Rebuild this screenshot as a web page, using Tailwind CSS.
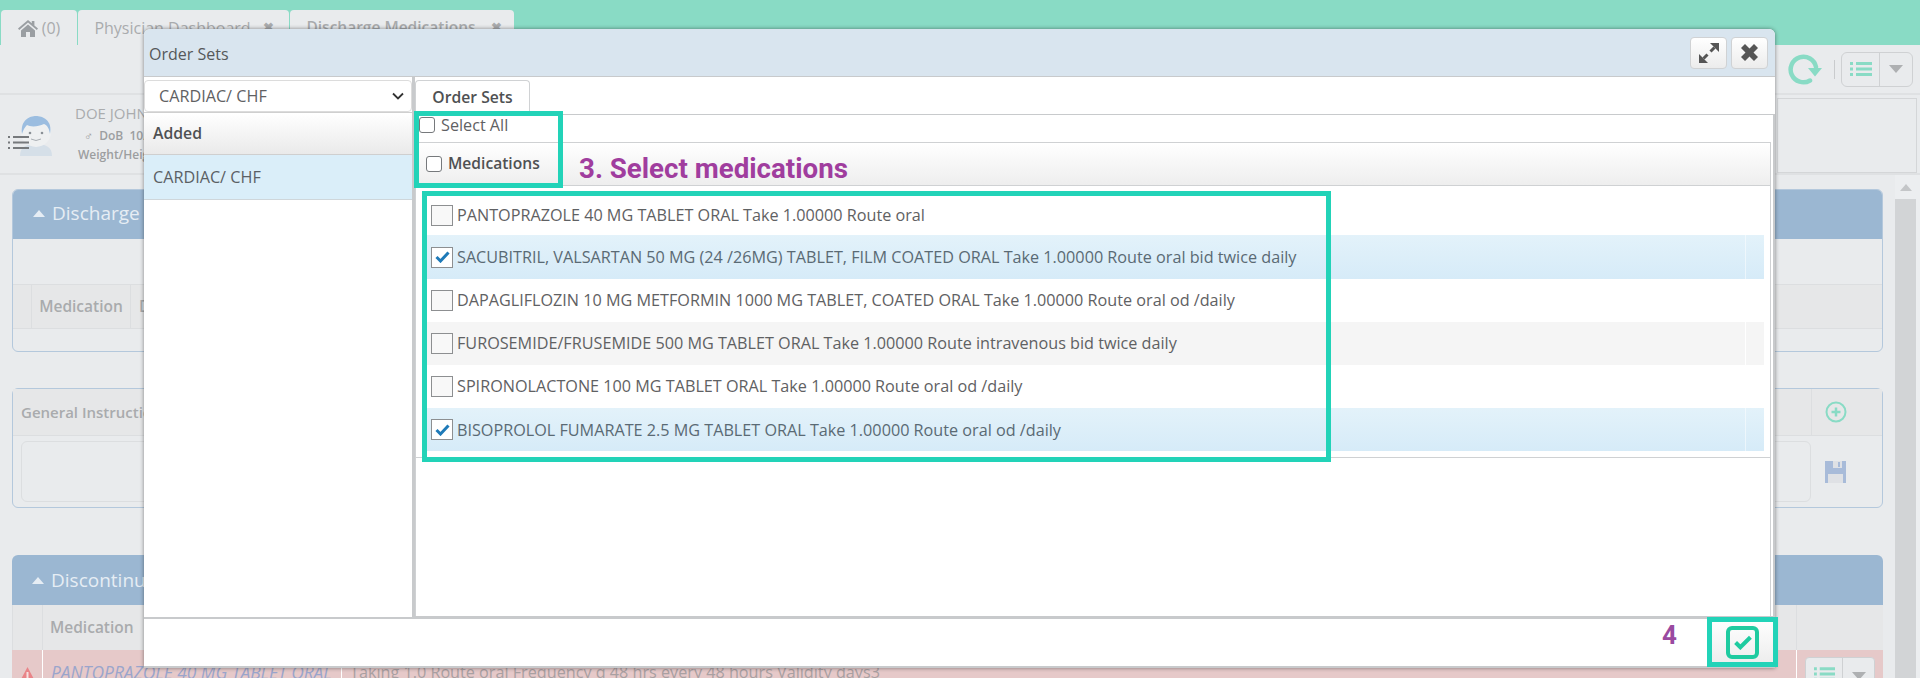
<!DOCTYPE html>
<html lang="en">
<head>
    <meta charset="UTF-8">
    <title>Order Sets</title>
    <script src="https://cdn.jsdelivr.net/npm/@tailwindcss/browser@4"></script>
</head>
<body class="relative h-[678px] w-[1920px] overflow-hidden bg-[#e9ebed] font-['Open_Sans',sans-serif] text-[15px] text-[#a9abad]">

    <!-- Top bar with tabs -->
    <div class="flex h-[45px] items-end gap-px bg-[#89dbc5] pl-px">
        <div class="flex h-[35px] w-[76px] items-center justify-center gap-1 rounded-t bg-[#e9ebed] text-[16px] text-[#a9abad]">
            <svg class="h-[18px] w-[20px]" viewBox="0 0 20 18" fill="#9a9ea2"><path d="M10 1 0 9.600l1.200 1.400L10 3.400l8.800 7.600 1.200-1.400-3.600-3.100V2h-2.600v2.200zM3 11.400V18h5v-5h4v5h5v-6.600L10 5.400z"/></svg>
            <span>(0)</span>
        </div>
        <div class="flex h-[35px] w-[211px] items-center justify-center gap-3 rounded-t bg-[#e9ebed] pl-px text-[16px] text-[#a9abad]"><span>Physician Dashboard</span><span class="text-[13px] font-bold">✖</span></div>
        <div class="flex h-[35px] w-[224px] items-center justify-center gap-[15px] rounded-t bg-[#e9ebed] pl-[4px] text-[15.500px] font-semibold text-[#a9abad]"><span>Discharge Medications</span><span class="text-[13px] font-bold">✖</span></div>
    </div>

    <!-- Toolbar -->
    <div class="flex h-[50px] items-center justify-end border-b-2 border-[#dfe1e3] pr-[7px]">
        <svg class="mr-[12px] h-[32px] w-[34px]" viewBox="0 0 34 32" fill="none"><path d="M22 27.500A12.800 12.800 0 1 1 28 14" stroke="#89dbc5" stroke-width="4.500" stroke-linecap="round"/><path d="M20 15h14l-7 8.500z" fill="#89dbc5"/></svg>
        <div class="mr-[6px] h-[19px] w-px bg-[#c9cbcd]"></div>
        <div class="flex h-[35px] w-[72px] overflow-hidden rounded-md border border-[#cfd1d3]">
            <div class="flex w-[38px] items-center justify-center border-r border-[#cfd1d3]">
                <svg class="h-[16px] w-[22px]" viewBox="0 0 22 16" fill="#89dbc5"><path d="M0 1h3v3H0zM6 1h16v3H6zM0 6.500h3v3H0zM6 6.500h16v3H6zM0 12h3v3H0zM6 12h16v3H6z"/></svg>
            </div>
            <div class="flex flex-1 items-center justify-center"><div class="h-0 w-0 border-x-[7px] border-t-[8px] border-x-transparent border-t-[#aeb0b2]"></div></div>
        </div>
    </div>

    <!-- Patient banner -->
    <div class="flex h-[80px] border-b-2 border-[#dfe1e3]">
        <div class="relative w-[70px] shrink-0">
            <svg class="absolute top-[19px] left-[16px] h-[42px] w-[40px]" viewBox="0 0 40 42"><path d="M4 42c0-9 6-12 16-12s16 3 16 12z" fill="#d5dfe8"/><circle cx="20" cy="18" r="15" fill="#eef0f1"/><path d="M6 20C4 6 14 2 20 2s17 4 14 18c-1-6-3-9-6-10-6 3-14 3-17 1-2 2-4 5-5 9z" fill="#9bbde0"/><circle cx="14" cy="19" r="1.300" fill="#8a9096"/><circle cx="26" cy="19" r="1.300" fill="#8a9096"/><path d="M15 25q5 3 10 0" stroke="#a9aeb3" fill="none"/></svg>
            <svg class="absolute top-[40px] left-[8px] h-[15px] w-[21px]" viewBox="0 0 21 15" fill="#76797c"><path d="M0 1h2v2H0zM5 1h16v2H5zM0 6.500h2v2H0zM5 6.500h16v2H5zM0 12h2v2H0zM5 12h16v2H5z"/></svg>
        </div>
        <div class="flex-1 pt-[6px]">
            <div class="pl-[5px] text-[15px] leading-[24px] text-[#aaacae]">DOE JOHN</div>
            <div class="pl-[14px] text-[12px] leading-[22px] font-semibold text-[#9c9ea0]">♂ &nbsp;DoB &nbsp;10/10/1980</div>
            <div class="pl-[8px] text-[12px] leading-[16px] font-semibold text-[#9c9ea0]">Weight/Height</div>
        </div>
        <div class="mt-[3px] mr-[3px] h-[75px] w-[140px] border border-[#d4d6d8]"></div>
    </div>

    <!-- Scrolling content -->
    <div class="flex h-[503px]">
        <div class="w-[1895px] pt-[14px] pr-[12px] pl-[12px]">
            <div class="h-[163px] overflow-hidden rounded-t-md rounded-b-md border border-[#b4c8dc]">
                <div class="flex h-[49px] items-center gap-[7px] bg-[#9bb7d2] pb-[2px] pl-[20px] text-[19px] text-[#e6edf4]">
                    <div class="h-0 w-0 border-x-[6px] border-b-[7px] border-x-transparent border-b-[#e6edf4]"></div><span>Discharge Medications</span>
                </div>
                <div class="h-[46px] border-b border-[#dcdee0]"></div>
                <div class="flex h-[44px] border-b border-[#dcdee0] bg-[#e6e7e8] text-[15.500px] font-semibold text-[#a9abad]">
                    <div class="w-[19px] border-r border-[#dcdee0]"></div>
                    <div class="flex w-[99px] items-center justify-center border-r border-[#dcdee0]">Medication</div>
                    <div class="flex items-center pl-[8px]">Dose</div>
                </div>
            </div>

            <div class="mt-[36px] h-[120px] rounded-md border border-[#b4c8dc]">
                <div class="flex h-[47px] border-b border-[#dcdee0] bg-[#e6e7e8]">
                    <div class="flex flex-1 items-center pl-[8px] text-[15px] font-semibold">General Instructions</div>
                    <div class="flex w-[71px] items-center justify-center border-l border-[#dcdee0] pr-[22px]">
                        <svg class="h-[22px] w-[22px]" viewBox="0 0 22 22" fill="none" stroke="#89dbc5" stroke-width="2"><circle cx="11" cy="11" r="9.500"/><path d="M11 6.500v9M6.500 11h9" stroke-width="2.500"/></svg>
                    </div>
                </div>
                <div class="flex h-[71px]">
                    <div class="my-[5px] ml-[8px] flex-1 rounded-md border border-[#dcdee0]"></div>
                    <div class="flex w-[71px] items-center justify-center pr-[22px]">
                        <svg class="h-[22px] w-[21px]" viewBox="0 0 21 22"><path d="M0 0h21v22H0z" fill="#a8bbd9"/><path d="M8 0h9v7H8z" fill="#dfe1e5"/><path d="M13 1h2v5h-2z" fill="#a8bbd9"/><path d="M3 13h15v9H3z" fill="#dfe1e5"/></svg>
                    </div>
                </div>
            </div>

            <div class="mt-[47px] overflow-hidden rounded-t-md">
                <div class="flex h-[50px] items-center gap-[7px] bg-[#9bb7d2] pl-[20px] text-[19px] text-[#e6edf4]">
                    <div class="h-0 w-0 border-x-[6px] border-b-[7px] border-x-transparent border-b-[#e6edf4]"></div><span>Discontinued Medications</span>
                </div>
                <div class="flex h-[45px] bg-[#e6e7e8] text-[15.500px] font-semibold text-[#a9abad]">
                    <div class="w-[31px] border-r border-l border-[#dcdee0]"></div>
                    <div class="flex flex-1 items-center pl-[7px]">Medication</div>
                    <div class="w-[87px] border-l border-[#dcdee0]"></div>
                </div>
                <div class="flex h-[40px] bg-[#e6c9c9] text-[16.200px] text-[#a9a0a2]">
                    <div class="flex w-[31px] justify-center border-r border-white pt-[17px]">
                        <svg class="h-[16px] w-[17px]" viewBox="0 0 17 16"><path d="M8.500 0 17 16H0z" fill="#e98488"/><path d="M7.500 5h2v6h-2zM7.500 12h2v2h-2z" fill="#f6e0e0"/></svg>
                    </div>
                    <div class="w-[298px] truncate pt-[9px] pl-[8px] text-[17.400px] text-[#9aa5cc] italic">PANTOPRAZOLE 40 MG TABLET ORAL</div>
                    <div class="flex-1 border-l border-white pt-[10px] pl-[8px]">Taking 1.0 Route oral Frequency q 48 hrs every 48 hours Validity days3</div>
                    <div class="w-[87px] border-l border-white pt-[7px] pl-[8px]">
                        <div class="flex h-[30px] w-[70px] rounded border border-[#cfd1d3] bg-[#e9ebed]">
                            <div class="flex w-[37px] items-start justify-center border-r border-[#cfd1d3] pt-[8px]">
                                <svg class="h-[16px] w-[21px]" viewBox="0 0 22 16" fill="#89dbc5"><path d="M0 1h3v3H0zM6 1h16v3H6zM0 6.500h3v3H0zM6 6.500h16v3H6zM0 12h3v3H0zM6 12h16v3H6z"/></svg>
                            </div>
                            <div class="flex flex-1 justify-center pt-[14px]"><div class="h-0 w-0 border-x-[7px] border-t-[8px] border-x-transparent border-t-[#aeb0b2]"></div></div>
                        </div>
                    </div>
                </div>
            </div>
        </div>
        <!-- Scrollbar -->
        <div class="flex w-[25px] flex-col items-center bg-[#eceef0] pr-[4px]">
            <div class="mt-[9px] mb-[8px] h-0 w-0 border-x-[6px] border-b-[7px] border-x-transparent border-b-[#c4c6c8]"></div>
            <div class="w-[21px] flex-1 bg-[#d2d4d6]"></div>
        </div>
    </div>

    <!-- Order Sets dialog -->
    <div class="absolute top-[29px] left-[144px] flex h-[639px] w-[1631px] flex-col overflow-hidden rounded-t-md bg-white text-[16.200px] text-[#5f6163] shadow-[0_0_4px_rgba(0,0,0,0.45)]">
        <div class="flex h-[48px] shrink-0 items-center justify-between border-b border-[#c8cacc] bg-[#d9e5ef] pr-[7px] pl-[5px] text-[16px] text-[#55585a]">
            <span class="pt-[2px]">Order Sets</span>
            <div class="flex gap-[4px]">
                <div class="flex h-[32px] w-[37px] items-center justify-center rounded border border-[#d0d2d4] bg-gradient-to-b from-white to-[#ececec]">
                    <svg class="h-[20px] w-[20px]" viewBox="0 0 20 20" fill="#555" stroke="#555"><path d="M11 0h9v9z" stroke="none"/><path d="M0 11v9h9z" stroke="none"/><path d="M15.500 4.500 11.500 8.500M4.500 15.500 8.500 11.500" stroke-width="3"/></svg>
                </div>
                <div class="flex h-[32px] w-[37px] items-center justify-center rounded border border-[#d0d2d4] bg-gradient-to-b from-white to-[#ececec]">
                    <svg class="h-[17px] w-[17px]" viewBox="0 0 17 17" fill="#555"><path d="M4 0l4.500 4.500L13 0l4 4-4.500 4.500L17 13l-4 4-4.500-4.500L4 17l-4-4 4.500-4.500L0 4z"/></svg>
                </div>
            </div>
        </div>

        <div class="flex min-h-0 flex-1">
            <!-- Left list -->
            <div class="w-[271px] shrink-0 border-r-[3px] border-[#c8cacc] pt-[3px]">
                <div class="flex h-[32px] items-center justify-between rounded border border-[#dcdcdc] pr-[7px] pl-[14px]">
                    <span>CARDIAC/ CHF</span>
                    <svg class="h-[8px] w-[12px]" viewBox="0 0 12 8" fill="none" stroke="#333" stroke-width="1.800"><path d="M1 1.500l5 5 5-5"/></svg>
                </div>
                <div class="flex h-[43px] items-center border-y border-[#cfcfcf] bg-gradient-to-b from-white to-[#eaeaea] pl-[9px] text-[15.800px] font-semibold text-[#4f5153]">Added</div>
                <div class="flex h-[45px] items-center border-b border-[#cfd6da] bg-[#daeef9] pl-[9px] text-[#5a6064]">CARDIAC/ CHF</div>
            </div>

            <!-- Right panel -->
            <div class="flex min-w-0 flex-1 flex-col pt-[3px]">
                <div class="flex h-[35px] shrink-0 items-end border-b border-[#c8cacc]">
                    <div class="-mb-px flex h-[35px] w-[115px] items-center justify-center rounded-t border border-b-0 border-[#d0d2d4] bg-white text-[15.700px] font-semibold text-[#4f5153]">Order Sets</div>
                </div>
                <div class="flex min-h-0 flex-1 flex-col border-r-2 border-b border-[#c8cacc]">
                    <div class="flex h-[27px] shrink-0 items-start gap-[6px] pl-[4px] leading-[20px]">
                        <div class="mt-[2px] h-[16px] w-[16px] rounded-[3px] border border-[#76797c] bg-white"></div>
                        <span>Select All</span>
                    </div>
                    <div class="mr-[2px] min-h-0 flex-1 border-x border-[#cfd1d3]">
                        <div class="h-[316px] border-b border-[#cfd1d3]">
                            <div class="flex h-[44px] items-center gap-[6px] border-y border-[#cfd1d3] bg-gradient-to-b from-white to-[#eeeeee] pl-[10px] text-[15.600px] font-semibold text-[#4f5153]">
                                <div class="h-[16px] w-[16px] rounded-[3px] border border-[#76797c] bg-white"></div>
                                <span>Medications</span>
                            </div>
                            <div class="pt-[9px] pr-[6px] pl-[11px]">
                                <div class="flex h-[40px] items-center gap-[4px] pl-[4px]">
                                    <div class="h-[21px] w-[22px] shrink-0 border border-[#8d8f91] bg-[#f8f8f8]"></div>PANTOPRAZOLE 40 MG TABLET ORAL Take 1.00000 Route oral
                                </div>
                                <div class="flex h-[44px] items-center gap-[4px] bg-gradient-to-b from-[#e3f2fa] to-[#d6ebf8] pl-[4px] text-[#5a6a74]">
                                    <div class="flex h-[21px] w-[22px] shrink-0 items-center justify-center border border-[#8d8f91] bg-white"><svg class="h-[12px] w-[15px]" viewBox="0 0 15 12" fill="none" stroke="#1e7ab8" stroke-width="3"><path d="M1.500 6l4 4 8-8.500"/></svg></div>
                                    <span class="flex-1">SACUBITRIL, VALSARTAN 50 MG (24 /26MG) TABLET, FILM COATED ORAL Take 1.00000 Route oral bid twice daily</span>
                                    <div class="w-[19px] self-stretch border-l border-white/50"></div>
                                </div>
                                <div class="flex h-[43px] items-center gap-[4px] pl-[4px]">
                                    <div class="h-[21px] w-[22px] shrink-0 border border-[#8d8f91] bg-[#f8f8f8]"></div>DAPAGLIFLOZIN 10 MG METFORMIN 1000 MG TABLET, COATED ORAL Take 1.00000 Route oral od /daily
                                </div>
                                <div class="flex h-[43px] items-center gap-[4px] bg-[#f5f5f5] pl-[4px]">
                                    <div class="h-[21px] w-[22px] shrink-0 border border-[#8d8f91] bg-[#f8f8f8]"></div>
                                    <span class="flex-1">FUROSEMIDE/FRUSEMIDE 500 MG TABLET ORAL Take 1.00000 Route intravenous bid twice daily</span>
                                    <div class="w-[19px] self-stretch border-l border-white"></div>
                                </div>
                                <div class="flex h-[43px] items-center gap-[4px] pl-[4px]">
                                    <div class="h-[21px] w-[22px] shrink-0 border border-[#8d8f91] bg-[#f8f8f8]"></div>SPIRONOLACTONE 100 MG TABLET ORAL Take 1.00000 Route oral od /daily
                                </div>
                                <div class="flex h-[43px] items-center gap-[4px] bg-gradient-to-b from-[#e3f2fa] to-[#d6ebf8] pl-[4px] text-[#5a6a74]">
                                    <div class="flex h-[21px] w-[22px] shrink-0 items-center justify-center border border-[#8d8f91] bg-white"><svg class="h-[12px] w-[15px]" viewBox="0 0 15 12" fill="none" stroke="#1e7ab8" stroke-width="3"><path d="M1.500 6l4 4 8-8.500"/></svg></div>
                                    <span class="flex-1 pt-[2px]">BISOPROLOL FUMARATE 2.5 MG TABLET ORAL Take 1.00000 Route oral od /daily</span>
                                    <div class="w-[19px] self-stretch border-l border-white/50"></div>
                                </div>
                            </div>
                        </div>
                    </div>
                </div>
            </div>
        </div>

        <!-- Footer -->
        <div class="flex h-[51px] shrink-0 justify-end border-y-2 border-[#c8cacc] pr-[2px]">
            <div class="flex w-[61px] items-center justify-center bg-gradient-to-b from-white to-[#ececec]">
                <div class="flex h-[33px] w-[33px] items-center justify-center rounded-[6px] border-[4px] border-[#1fcba0]">
                    <svg class="h-[15px] w-[18px]" viewBox="0 0 17 14" fill="none" stroke="#1fcba0" stroke-width="3.800"><path d="M1.500 7l4.500 4.500L15.500 2"/></svg>
                </div>
            </div>
        </div>
    </div>

    <!-- Tutorial annotations -->
    <div class="absolute top-[111px] left-[414px] h-[77px] w-[149px] border-[5px] border-[#22d3b8]"></div>
    <div class="absolute top-[191px] left-[422px] h-[271px] w-[909px] border-[5px] border-[#22d3b8]"></div>
    <div class="absolute top-[617px] left-[1707px] h-[50px] w-[71px] border-[5px] border-[#22d3b8]"></div>
    <div class="absolute top-[151px] left-[579px] font-['Roboto',sans-serif] text-[27.700px] leading-[36px] font-bold text-[#a03d9e]">3. Select medications</div>
    <div class="absolute top-[618px] left-[1662px] font-['Roboto',sans-serif] text-[26px] leading-[34px] font-bold text-[#9a4aa0]">4</div>
</body>
</html>
